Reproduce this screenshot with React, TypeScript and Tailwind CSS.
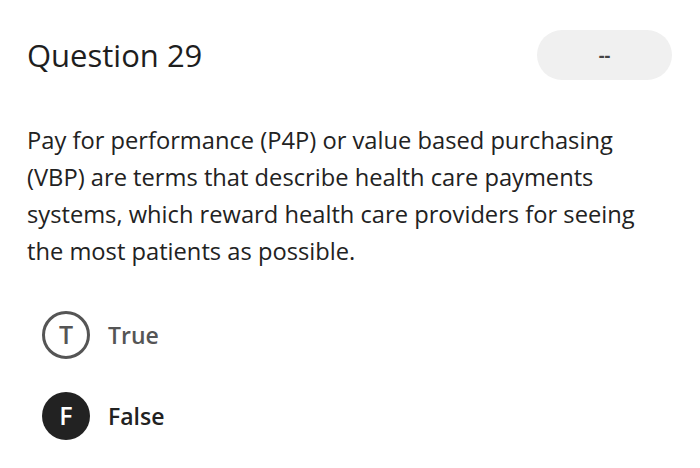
import React from 'react';

const options = [
  { letter: 'T', label: 'True', selected: false },
  { letter: 'F', label: 'False', selected: true },
];

const App: React.FC = () => {
  return (
    <div className="w-[700px] h-[468px] bg-white overflow-hidden" style={{ fontFamily: '"Open Sans", sans-serif' }}>
      <div className="flex items-center justify-between pl-[27px] pr-[28px] pt-[30px]">
        <h1 className="text-[31px] leading-[50px] text-[#1e1e1e] font-medium">Question 29</h1>
        <div className="w-[135px] h-[50px] rounded-full bg-[#f0f0f0] flex items-center justify-center text-[18px] font-bold text-[#444444]">
          --
        </div>
      </div>
      <p className="mt-[42px] pl-[27px] w-[667px] text-[23.7px] leading-[37px] text-[#222222]">
        Pay for performance (P4P) or value based purchasing (VBP) are terms that describe health care payments
        systems, which reward health care providers for seeing the most patients as possible.
      </p>
      <div className="mt-[41px] pl-[42px] flex flex-col gap-[33px]">
        {options.map((o) => (
          <div key={o.letter} className="flex items-center gap-[18px]">
            <div
              className={
                o.selected
                  ? 'w-[48px] h-[48px] rounded-full bg-[#222222] text-white flex items-center justify-center text-[25px] font-semibold'
                  : 'w-[48px] h-[48px] rounded-full border-[3px] border-[#555555] text-[#555555] flex items-center justify-center text-[25px] font-semibold'
              }
            >
              {o.letter}
            </div>
            <span
              className={
                o.selected ? 'text-[23px] font-semibold text-[#222222]' : 'text-[23px] font-semibold text-[#555555]'
              }
            >
              {o.label}
            </span>
          </div>
        ))}
      </div>
    </div>
  );
};

export default App;
